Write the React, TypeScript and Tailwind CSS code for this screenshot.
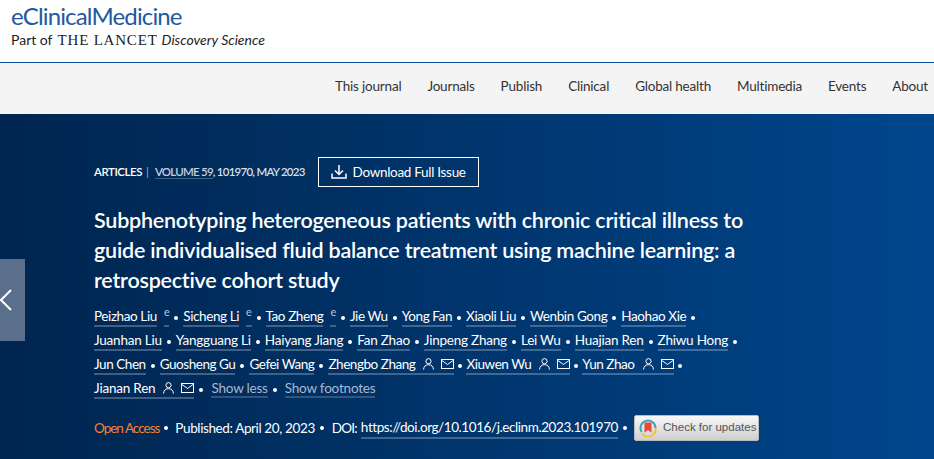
const Dot = ({ cls = "ml-[5px] mr-[5px]" }: { cls?: string }) => (
  <span className={`inline-block w-[4px] h-[4px] rounded-full bg-white align-[1px] ${cls}`} />
);

const User = () => (
  <svg width="11" height="12" viewBox="0 0 11 12" fill="none" stroke="currentColor" strokeWidth="1" className="inline-block align-[-1px]">
    <circle cx="5.5" cy="3.2" r="2.6" />
    <path d="M0.6 11.5c0-3 2-4.8 4.9-4.8s4.9 1.8 4.9 4.8" />
  </svg>
);
const Mail = () => (
  <svg width="13" height="10" viewBox="0 0 13 10" fill="none" stroke="currentColor" strokeWidth="1" className="inline-block align-[0px]">
    <rect x="0.5" y="0.5" width="12" height="9" />
    <path d="M1 1.5l5.5 4 5.5-4" />
  </svg>
);

function Author({ name, e, contact, last }: { name: string; e?: boolean; contact?: boolean; last?: boolean }) {
  return (
    <span className="whitespace-nowrap">
      <span className="border-b-2 border-[#ffffff40] pb-[1px]">
        {name}
        {contact && (
          <>
            <span className="ml-[8px] mr-[7px]"><User /></span>
            <Mail />
          </>
        )}
      </span>
      {e && (
        <span className="ml-[7px] border-b-2 border-[#ffffff40] pb-[1px]">
          <sup className="text-[11px] leading-none text-[#b4c3d6]">e</sup>
        </span>
      )}
      <Dot cls={last ? "ml-[5px] mr-[8px]" : contact ? "ml-[4px] mr-[4px]" : "ml-[5px] mr-[5px]"} />
    </span>
  );
}

const nav = ["This journal", "Journals", "Publish", "Clinical", "Global health", "Multimedia", "Events", "About"];

export default function App() {
  return (
    <div className="w-[934px] h-[459px] overflow-hidden bg-white font-['Lato',sans-serif]">
      <header className="h-[63px] border-b border-[#00509e] pl-[11px] pt-[2px]">
        <div className="text-[24px] leading-[28px] text-[#1f5a9e] tracking-[-0.85px]">eClinicalMedicine</div>
        <div className="text-[14px] leading-[20px] text-[#222] flex items-baseline">
          <span>Part of</span>
          <span className="ml-[5px] font-['Liberation_Serif',serif] text-[15px] tracking-[0.8px]">THE LANCET</span>
          <span className="ml-[4px] italic">Discovery Science</span>
        </div>
      </header>
      <nav className="h-[51px] pb-[4px] bg-[#f4f4f4] flex items-center justify-end pr-[6px] gap-[26px] text-[13.5px] tracking-[-0.2px] text-[#333]">
        {nav.map((n) => (
          <span key={n}>{n}</span>
        ))}
      </nav>
      <section className="relative h-[345px] bg-gradient-to-r from-[#00254f] to-[#00468c] pl-[94px] pt-[43px] text-white">
        <div className="absolute left-0 top-[145px] w-[25px] h-[82px] bg-[#5a6f8c] flex items-center">
          <svg width="12" height="24" viewBox="0 0 12 24" fill="none" stroke="white" strokeWidth="2">
            <path d="M11 2L1 12l10 10" />
          </svg>
        </div>
        <div className="flex items-center h-[30px] text-[11.5px] font-semibold">
          <span className="tracking-[-0.45px]">ARTICLES</span>
          <span className="ml-[4px] mr-[6px] text-[#8fb0d0] font-normal">|</span>
          <span className="text-[#d5dfec] tracking-[-0.75px]">
            <span className="border-b border-[#ffffff40] text-[#c0cfe0]">VOLUME 59</span>, 101970, MAY 2023
          </span>
          <button className="ml-[13px] w-[161px] h-[30px] border border-white flex items-center justify-center gap-[6px] text-[13.5px] font-normal tracking-[-0.3px]">
            <svg width="16" height="14" viewBox="0 0 16 14" fill="none" stroke="white" strokeWidth="1.5">
              <path d="M8 0v9M4 5.5L8 9.5l4-4M1 8.5v4.5h14V8.5" />
            </svg>
            Download Full Issue
          </button>
        </div>
        <h1 className="mt-[18px] w-[660px] text-[21.5px] tracking-[-0.22px] leading-[30px] font-semibold">
          Subphenotyping heterogeneous patients with chronic critical illness to guide individualised fluid balance treatment using machine learning: a retrospective cohort study
        </h1>
        <div className="mt-[9px] w-[650px] text-[13.5px] leading-[24px]">
          <div className="tracking-[-0.4px]">
            <Author name="Peizhao Liu" e />
            <Author name="Sicheng Li" e />
            <Author name="Tao Zheng" e />
            <Author name="Jie Wu" />
            <Author name="Yong Fan" />
            <Author name="Xiaoli Liu" />
            <Author name="Wenbin Gong" />
            <Author name="Haohao Xie" />
          </div>
          <div className="tracking-[-0.22px]">
            <Author name="Juanhan Liu" />
            <Author name="Yangguang Li" />
            <Author name="Haiyang Jiang" />
            <Author name="Fan Zhao" />
            <Author name="Jinpeng Zhang" />
            <Author name="Lei Wu" />
            <Author name="Huajian Ren" />
            <Author name="Zhiwu Hong" />
          </div>
          <div className="tracking-[-0.45px]">
            <Author name="Jun Chen" />
            <Author name="Guosheng Gu" />
            <Author name="Gefei Wang" />
            <Author name="Zhengbo Zhang" contact />
            <Author name="Xiuwen Wu" contact />
            <Author name="Yun Zhao" contact />
          </div>
          <div className="tracking-[-0.2px]">
            <Author name="Jianan Ren" contact last />
            <span className="text-[#a9b9cd] border-b-2 border-[#ffffff30]">Show less</span>
            <Dot cls="ml-[5px] mr-[8px]" />
            <span className="text-[#a9b9cd] border-b-2 border-[#ffffff30]">Show footnotes</span>
          </div>
        </div>
        <div className="mt-[15px] flex items-center h-[26px] text-[13.5px] tracking-[-0.38px]">
          <span className="text-[#f5822a] tracking-[-1px]">Open Access</span>
          <span className="w-[4px] h-[4px] rounded-full bg-white ml-[5px] mr-[7px]" />
          <span>Published: April 20, 2023</span>
          <span className="w-[4px] h-[4px] rounded-full bg-white ml-[5px] mr-[8px]" />
          <span className="tracking-[-0.8px]">DOI:</span>
          <span className="ml-[4px] border-b-2 border-[#ffffff40] tracking-[-0.42px]">https://doi.org/10.1016/j.eclinm.2023.101970</span>
          <span className="w-[4px] h-[4px] rounded-full bg-white ml-[5px] mr-[7px]" />
          <button className="w-[125px] h-[26px] rounded-[2px] border border-[#bbb] bg-gradient-to-b from-[#f8f8f8] to-[#cfcfcf] flex items-center pl-[4px] gap-[6px] text-[11.5px] tracking-normal text-[#555] font-['Liberation_Sans',sans-serif]">
            <svg width="18" height="18" viewBox="0 0 18 18" fill="none">
              <path d="M3 14.5A7.5 7.5 0 0 0 16.5 9" stroke="#f2c230" strokeWidth="2" />
              <path d="M2.6 13A7.5 7.5 0 1 1 16.5 9" stroke="#3aa6b5" strokeWidth="2" />
              <path d="M5.5 3.5h7v10L9 11l-3.5 2.5z" fill="#e8453c" />
            </svg>
            Check for updates
          </button>
        </div>
      </section>
    </div>
  );
}
